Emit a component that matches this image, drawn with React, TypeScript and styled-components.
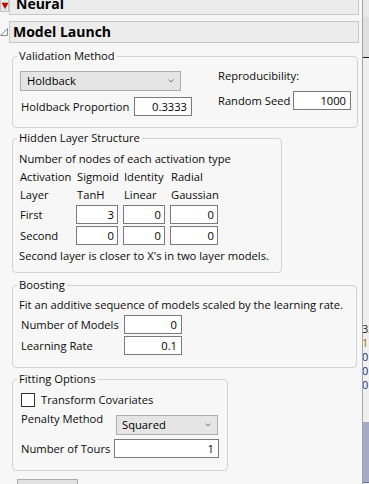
import React from "react";
import styled, { createGlobalStyle } from "styled-components";

const FONT = `"Open Sans", "Noto Sans", "Liberation Sans", sans-serif`;

const GlobalStyle = createGlobalStyle`
  html, body { margin: 0; padding: 0; background: #f7f7f7; }
  body {
    font-family: ${FONT};
    font-size: 11.2px;
    line-height: 16px;
    color: #0c0c0c;
    overflow: hidden;
  }
  *, *::before, *::after { box-sizing: border-box; }
`;

const Page = styled.div`
  display: flex;
  width: 369px;
  height: 484px;
  overflow: hidden;
`;

const Main = styled.div`
  flex: none;
  width: 362px;
  display: flex;
  flex-direction: column;
`;

const OutlineRow = styled.div<{ $mt: number }>`
  flex: none;
  display: flex;
  height: 22px;
  margin-top: ${(p) => p.$mt}px;
`;

const IconCell = styled.div`
  flex: none;
  width: 9px;
  height: 22px;
`;

const OutlineTitle = styled.div<{ $pl: number }>`
  width: 350px;
  border: 1px solid #c9c9c9;
  background: #ececec;
  font-weight: 700;
  font-size: 14px;
  line-height: 20px;
  padding-left: ${(p) => p.$pl}px;
  color: #000;
  white-space: nowrap;
`;

const Group = styled.fieldset<{ $w: number; $mt: number; $pt: number; $pb: number }>`
  flex: none;
  width: ${(p) => p.$w}px;
  margin: ${(p) => p.$mt}px 0 0 12px;
  padding: ${(p) => p.$pt}px 6px ${(p) => p.$pb}px 6px;
  border: 1px solid #d2d2d2;
  border-radius: 4px;
  min-width: 0;
`;

const Legend = styled.legend`
  padding: 0 2px;
  margin-left: -2px;
  line-height: 16px;
  color: #0c0c0c;
`;

const TwoCols = styled.div`
  display: flex;
`;

const Col = styled.div<{ $w?: number; $pt: number; $gap: number }>`
  display: flex;
  flex-direction: column;
  width: ${(p) => (p.$w ? `${p.$w}px` : "auto")};
  padding-top: ${(p) => p.$pt}px;
  gap: ${(p) => p.$gap}px;
`;

const Select = styled.div<{ $w: number; $h: number; $pl: number; $ml?: number; $mt?: number }>`
  width: ${(p) => p.$w}px;
  height: ${(p) => p.$h}px;
  margin-left: ${(p) => p.$ml ?? 0}px;
  margin-top: ${(p) => p.$mt ?? 0}px;
  border: 1px solid #adadad;
  background: #e5e5e5;
  display: flex;
  align-items: center;
  justify-content: space-between;
  padding: 0 6px 0 ${(p) => p.$pl}px;
  color: #000;
`;

const FieldRow = styled.div<{ $lw: number; $pl?: number; $align?: string; $mt?: number }>`
  display: grid;
  grid-template-columns: ${(p) => p.$lw}px auto;
  align-items: ${(p) => p.$align ?? "center"};
  padding-left: ${(p) => p.$pl ?? 2}px;
  margin-top: ${(p) => p.$mt ?? 0}px;
`;

const RowLabel = styled.span`
  white-space: nowrap;
`;

const NumBox = styled.div<{ $w: number; $pr?: number }>`
  width: ${(p) => p.$w}px;
  height: 19px;
  border: 1px solid #7a7a7a;
  background: #fff;
  text-align: right;
  padding-right: ${(p) => p.$pr ?? 4}px;
  line-height: 17px;
  color: #000;
`;

const Para = styled.div<{ $mt?: number }>`
  margin-top: ${(p) => p.$mt ?? 0}px;
  white-space: nowrap;
`;

const NodeGrid = styled.div`
  display: grid;
  grid-template-columns: 51px 42px 42px 48px;
  grid-template-rows: 16px 16px 19px 19px;
  column-gap: 5px;
  row-gap: 2px;
  margin-top: 2px;
  padding-left: 1px;
  align-items: center;
`;

const GridHead = styled.span<{ $pl?: number }>`
  padding-left: ${(p) => p.$pl ?? 1}px;
  white-space: nowrap;
`;

const Rows = styled.div<{ $gap: number; $mt?: number }>`
  display: flex;
  flex-direction: column;
  gap: ${(p) => p.$gap}px;
  margin-top: ${(p) => p.$mt ?? 0}px;
`;

const CheckRow = styled.label`
  display: flex;
  align-items: center;
  gap: 6px;
  padding-left: 2px;
  height: 16px;
`;

const CheckBox = styled.span`
  width: 14px;
  height: 14px;
  border: 1px solid #333;
  background: #fff;
  flex: none;
`;

const GoButton = styled.div`
  flex: none;
  width: 61px;
  height: 23px;
  margin: 8px 0 0 17px;
  border: 1px solid #adadad;
  background: #e1e1e1;
  text-align: center;
  line-height: 16px;
  padding-top: 2px;
  color: #000;
`;

const Side = styled.div`
  flex: none;
  width: 7px;
  display: flex;
  flex-direction: column;
  border-left: 1px solid #a5a5a5;
  background: #efefef;
  overflow: hidden;
`;

const SideTop = styled.div`
  flex: none;
  height: 58px;
  background: #e0e0e0;
  border-top: 17px solid #e9e9e9;
  border-bottom: 1px solid #1a1a1a;
`;

const SideList = styled.div`
  margin-top: 264px;
  display: flex;
  flex-direction: column;
  font-size: 11px;
  line-height: 14px;
  white-space: nowrap;
  text-indent: -1px;
`;

const SideCell = styled.span<{ $c: string }>`
  color: ${(p) => p.$c};
`;

const SideBlock = styled.div`
  flex: none;
  margin-top: 30px;
  height: 61px;
  background: #a4aac2;
  border-bottom: 1px solid #6b7084;
`;

const Chevron = () => (
  <svg width="6" height="4" viewBox="0 0 6 4">
    <polyline points="0.5,0.5 3,3 5.5,0.5" fill="none" stroke="#707070" strokeWidth="1" />
  </svg>
);

const RedTri = () => (
  <svg width="9" height="22" viewBox="0 0 9 22">
    <rect x="0.5" y="0.5" width="8" height="18" fill="#e6e6e6" stroke="#c4c4c4" />
    <polygon points="2,10 8,10 5,15.5" fill="#d00000" stroke="#8a0000" strokeWidth="0.5" />
  </svg>
);

const Disclosure = () => (
  <svg width="9" height="22" viewBox="0 0 9 22">
    <polygon points="7.5,7.5 7.5,14.5 0.5,14.5" fill="none" stroke="#8a8a8a" strokeWidth="1" />
  </svg>
);

export default function App() {
  return (
    <>
      <GlobalStyle />
      <Page>
        <Main>
          <OutlineRow $mt={-7}>
            <IconCell>
              <RedTri />
            </IconCell>
            <OutlineTitle $pl={6}>Neural</OutlineTitle>
          </OutlineRow>
          <OutlineRow $mt={6}>
            <IconCell>
              <Disclosure />
            </IconCell>
            <OutlineTitle $pl={3}>Model Launch</OutlineTitle>
          </OutlineRow>

          <Group $w={346} $mt={5} $pt={0} $pb={11}>
            <Legend>Validation Method</Legend>
            <TwoCols>
              <Col $w={200} $pt={7} $gap={6}>
                <Select $w={161} $h={20} $pl={6} $ml={1}>
                  <span>Holdback</span>
                  <Chevron />
                </Select>
                <FieldRow $lw={113}>
                  <RowLabel>Holdback Proportion</RowLabel>
                  <NumBox $w={58}>0.3333</NumBox>
                </FieldRow>
              </Col>
              <Col $pt={4} $gap={7}>
                <span>Reproducibility:</span>
                <FieldRow $lw={75} $pl={0}>
                  <RowLabel>Random Seed</RowLabel>
                  <NumBox $w={58}>1000</NumBox>
                </FieldRow>
              </Col>
            </TwoCols>
          </Group>

          <Group $w={270} $mt={2} $pt={5} $pb={8}>
            <Legend>Hidden Layer Structure</Legend>
            <Para>Number of nodes of each activation type</Para>
            <NodeGrid>
              <GridHead $pl={0}>Activation</GridHead>
              <GridHead>Sigmoid</GridHead>
              <GridHead>Identity</GridHead>
              <GridHead>Radial</GridHead>
              <GridHead $pl={0}>Layer</GridHead>
              <GridHead>TanH</GridHead>
              <GridHead>Linear</GridHead>
              <GridHead>Gaussian</GridHead>
              <GridHead $pl={0}>First</GridHead>
              <NumBox $w={42} $pr={3}>3</NumBox>
              <NumBox $w={42} $pr={3}>0</NumBox>
              <NumBox $w={48} $pr={3}>0</NumBox>
              <GridHead $pl={0}>Second</GridHead>
              <NumBox $w={42} $pr={3}>0</NumBox>
              <NumBox $w={42} $pr={3}>0</NumBox>
              <NumBox $w={48} $pr={3}>0</NumBox>
            </NodeGrid>
            <Para $mt={3}>Second layer is closer to X's in two layer models.</Para>
          </Group>

          <Group $w={345} $mt={4} $pt={4} $pb={12}>
            <Legend>Boosting</Legend>
            <Para>Fit an additive sequence of models scaled by the learning rate.</Para>
            <Rows $gap={2} $mt={2}>
              <FieldRow $lw={103}>
                <RowLabel>Number of Models</RowLabel>
                <NumBox $w={58}>0</NumBox>
              </FieldRow>
              <FieldRow $lw={103}>
                <RowLabel>Learning Rate</RowLabel>
                <NumBox $w={58}>0.1</NumBox>
              </FieldRow>
            </Rows>
          </Group>

          <Group $w={216} $mt={3} $pt={5} $pb={12}>
            <Legend>Fitting Options</Legend>
            <CheckRow>
              <CheckBox />
              <span>Transform Covariates</span>
            </CheckRow>
            <FieldRow $lw={95} $align="start" $mt={3}>
              <RowLabel>Penalty Method</RowLabel>
              <Select $w={102} $h={20} $pl={5} $mt={4}>
                <span>Squared</span>
                <Chevron />
              </Select>
            </FieldRow>
            <FieldRow $lw={93} $mt={4}>
              <RowLabel>Number of Tours</RowLabel>
              <NumBox $w={105}>1</NumBox>
            </FieldRow>
          </Group>

          <GoButton>Go</GoButton>
        </Main>
        <Side>
          <SideTop />
          <SideList>
            <SideCell $c="#222">32</SideCell>
            <SideCell $c="#b06a00">1</SideCell>
            <SideCell $c="#1d2f6a">0</SideCell>
            <SideCell $c="#1d2f6a">0</SideCell>
            <SideCell $c="#1d2f6a">0</SideCell>
          </SideList>
          <SideBlock />
        </Side>
      </Page>
    </>
  );
}
